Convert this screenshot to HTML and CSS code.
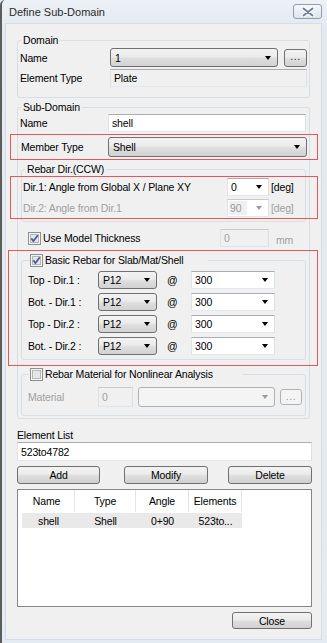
FILE: index.html
```html
<!DOCTYPE html>
<html>
<head>
<meta charset="utf-8">
<link rel="stylesheet" href="styles.css">
</head>
<body>
<div class="window">
  <div class="titlebar">
    <span class="title">Define Sub-Domain</span>
    <span class="closebtn"><svg width="14" height="10" viewBox="0 0 14 10"><path d="M2.5 1.5 L11.5 8.5 M11.5 1.5 L2.5 8.5" stroke="#fff" stroke-width="3.6" stroke-linecap="round"/><path d="M2.5 1.5 L11.5 8.5 M11.5 1.5 L2.5 8.5" stroke="#6f7c8c" stroke-width="1.8" stroke-linecap="round"/></svg></span>
  </div>
  <div class="frame">
    <div class="client">
      <fieldset class="grp g-domain">
        <legend>Domain</legend>
        <div class="row r-name">
          <span class="lbl w90">Name</span>
          <div class="combo w168"><span class="ctext">1</span><i class="arrow"></i></div>
          <span class="dots">...</span>
        </div>
        <div class="row r-etype">
          <span class="lbl w90">Element Type</span>
          <div class="ro w197">Plate</div>
        </div>
      </fieldset>

      <fieldset class="grp g-sub">
        <legend>Sub-Domain</legend>
        <div class="row r-subname">
          <span class="lbl w88">Name</span>
          <div class="tbox w198">shell</div>
        </div>
        <div class="redbox rb-member">
          <div class="row r-member">
            <span class="lbl w87">Member Type</span>
            <div class="combo w199"><span class="ctext">Shell</span><i class="arrow"></i></div>
          </div>
        </div>

        <fieldset class="grp g-dir">
          <legend>Rebar Dir.(CCW)</legend>
          <div class="redbox rb-dir">
            <div class="row r-dir">
              <span class="lbl w204">Dir.1: Angle from Global X / Plane XY</span>
              <div class="ecombo w42"><span class="ctext">0</span><i class="arrow"></i></div>
              <span class="unit">[deg]</span>
            </div>
            <div class="row r-dir r-dir2">
              <span class="lbl w204 dis">Dir.2: Angle from Dir.1</span>
              <div class="ecombo w42 disabled"><span class="ctext sel">90</span><i class="arrow"></i></div>
              <span class="unit dis">[deg]</span>
            </div>
          </div>
        </fieldset>

        <div class="row r-thick">
          <span class="chk"><svg width="13" height="13" viewBox="0 0 13 13"><rect x="0.5" y="0.5" width="12" height="12" fill="#f4f4f4" stroke="#8e8f8f"/><rect x="2.5" y="2.5" width="8" height="8" fill="#e6e6e6" stroke="#b6b8bb" stroke-width="1"/><path d="M3.3 6.4 L5.4 9 L9.8 3.2" fill="none" stroke="#4a5d94" stroke-width="1.7"/></svg></span>
          <span class="chklbl w179">Use Model Thickness</span>
          <div class="tbox w49 disabled"><span class="dis">0</span></div>
          <span class="mm">mm</span>
        </div>

        <div class="redbox rb-basic">
          <fieldset class="grp g-basic">
            <legend class="chklegend w179l">
              <span class="chk"><svg width="13" height="13" viewBox="0 0 13 13"><rect x="0.5" y="0.5" width="12" height="12" fill="#f4f4f4" stroke="#8e8f8f"/><rect x="2.5" y="2.5" width="8" height="8" fill="#e6e6e6" stroke="#b6b8bb" stroke-width="1"/><path d="M3.3 6.4 L5.4 9 L9.8 3.2" fill="none" stroke="#4a5d94" stroke-width="1.7"/></svg></span>
              <span class="chklbl">Basic Rebar for Slab/Mat/Shell</span>
            </legend>
            <div class="row r-bar">
              <span class="lbl w70">Top - Dir.1 :</span>
              <div class="combo w59"><span class="ctext">P12</span><i class="arrow"></i></div>
              <span class="at">@</span>
              <div class="ecombo w84"><span class="ctext">300</span><i class="arrow"></i></div>
            </div>
            <div class="row r-bar">
              <span class="lbl w70">Bot. - Dir.1 :</span>
              <div class="combo w59"><span class="ctext">P12</span><i class="arrow"></i></div>
              <span class="at">@</span>
              <div class="ecombo w84"><span class="ctext">300</span><i class="arrow"></i></div>
            </div>
            <div class="row r-bar">
              <span class="lbl w70">Top - Dir.2 :</span>
              <div class="combo w59"><span class="ctext">P12</span><i class="arrow"></i></div>
              <span class="at">@</span>
              <div class="ecombo w84"><span class="ctext">300</span><i class="arrow"></i></div>
            </div>
            <div class="row r-bar">
              <span class="lbl w70">Bot. - Dir.2 :</span>
              <div class="combo w59"><span class="ctext">P12</span><i class="arrow"></i></div>
              <span class="at">@</span>
              <div class="ecombo w84"><span class="ctext">300</span><i class="arrow"></i></div>
            </div>
          </fieldset>
        </div>

        <fieldset class="grp g-mat">
          <legend class="chklegend w214l">
            <span class="chk"><svg width="13" height="13" viewBox="0 0 13 13"><rect x="0.5" y="0.5" width="12" height="12" fill="#f4f4f4" stroke="#8e8f8f"/><rect x="2.5" y="2.5" width="8" height="8" fill="#e6e6e6" stroke="#b6b8bb" stroke-width="1"/></svg></span>
            <span class="chklbl">Rebar Material for Nonlinear Analysis</span>
          </legend>
          <div class="row r-mat">
            <span class="lbl w70 dis">Material</span>
            <div class="tbox w35 disabled"><span class="dis">0</span></div>
            <div class="dcombo w137"><i class="arrow garrow"></i></div>
            <span class="dots ddots">...</span>
          </div>
        </fieldset>
      </fieldset>

      <div class="ellabel">Element List</div>
      <div class="tbox ellist">523to4782</div>

      <div class="btnrow">
        <span class="btn b-add">Add</span>
        <span class="btn b-mod">Modify</span>
        <span class="btn b-del">Delete</span>
      </div>

      <div class="list">
        <div class="lhead">
          <span class="c c1">Name</span>
          <span class="c c2">Type</span>
          <span class="c c3">Angle</span>
          <span class="c c4">Elements</span>
        </div>
        <div class="lrow">
          <span class="c c1">shell</span>
          <span class="c c2">Shell</span>
          <span class="c c3">0+90</span>
          <span class="c c4">523to...</span>
        </div>
      </div>

      <div class="closerow">
        <span class="btn b-close">Close</span>
      </div>
    </div>
  </div>
</div>
</body>
</html>
```
FILE: styles.css
```css
* { box-sizing: border-box; }
html, body { margin: 0; padding: 0; }
body {
  width: 327px; height: 643px; overflow: hidden;
  background: #e4ebf3;
  font-family: "Liberation Sans", Arial, sans-serif;
  font-size: 10.5px; letter-spacing: -0.15px; color: #000;
}
.window {
  width: 327px; height: 643px;
  display: flex; flex-direction: column;
  background: linear-gradient(#edf1f6, #e2e9f1 30px, #e4ebf3);
  border-left: 2px solid #5c5c5c;
  border-top-left-radius: 5px;
}
.titlebar {
  height: 23px; flex: none;
  display: flex; align-items: center; justify-content: space-between;
  padding: 0 5px 0 7px;
}
.title { font-size: 11px; letter-spacing: 0; color: #2a2a2a; }
.closebtn {
  width: 29px; height: 15px;
  border: 1px solid #8e9cae; border-radius: 3px;
  background: linear-gradient(#f6f8fa, #dde4ec);
  display: flex; align-items: center; justify-content: center;
}
.frame { flex: 1; display: flex; padding: 0 5px 3px 3px; }
.client {
  flex: 1; display: flex; flex-direction: column;
  background: #f0f0f0;
  border: 1px solid #d3dde8;
  padding: 10px 9px 0 11px;
}

fieldset.grp {
  margin: 0; padding: 0; min-width: 0;
  border: 1px solid #d5dfe5; border-radius: 3px;
}
fieldset.grp > legend {
  padding: 0 2px; margin-left: 3px;
  line-height: 13px; height: 13px;
}
.row { display: flex; align-items: center; flex: none; }
.lbl { flex: none; white-space: nowrap; }
.dis { color: #a0a0a0; }

.w35 { width: 35px; } .w42 { width: 42px; } .w49 { width: 49px; }
.w59 { width: 59px; } .w70 { width: 70px; } .w84 { width: 84px; }
.w87 { width: 87px; } .w88 { width: 88px; } .w90 { width: 90px; }
.w137 { width: 137px; } .w168 { width: 168px; } .w179 { width: 179px; }
.w197 { width: 197px; } .w198 { width: 198px; } .w199 { width: 199px; }
.w204 { width: 204px; }

/* controls */
.combo {
  flex: none; height: 100%;
  display: flex; align-items: center;
  border: 1px solid #707070; border-radius: 3px;
  background: linear-gradient(#f3f3f3 0%, #ebebeb 45%, #dedede 55%, #d2d2d2 100%);
  padding-left: 4px;
}
.ecombo {
  flex: none; height: 100%;
  display: flex; align-items: center;
  border: 1px solid; border-color: #abadb3 #dbdfe6 #e3e9ef #e2e3ea;
  background: #fff; padding-left: 3px;
}
.ecombo.disabled { border-color: #c8cacd #dfe2e6 #e5e8ec #e2e3ea; }
.ecombo.disabled .ctext.sel { background: #f0f0f0; color: #9a9a9a; padding: 0 6px 0 1px; margin-left: -2px; line-height: 14px; }
.dcombo {
  flex: none; height: 100%; margin-left: 5px;
  display: flex; align-items: center;
  border: 1px solid #adb2b5; border-radius: 3px;
  background: #f4f4f4;
}
.ctext { white-space: nowrap; }
.arrow {
  margin-left: auto; margin-right: 6px;
  width: 0; height: 0;
  border-left: 3.5px solid transparent; border-right: 3.5px solid transparent;
  border-top: 4px solid #000;
}
.disabled .arrow, .garrow { border-top-color: #9a9a9a; }
.tbox {
  flex: none; height: 100%;
  display: flex; align-items: center;
  border: 1px solid; border-color: #abadb3 #dbdfe6 #e3e9ef #e2e3ea;
  background: #fff; padding-left: 3px;
}
.tbox.disabled { background: #f0f0f0; border-color: #c9cbce #dcdfe3 #e2e5e9 #dfe1e5; }
.ro {
  flex: none; height: 100%;
  display: flex; align-items: center;
  border: 1px solid; border-color: #abadb3 #dbdfe6 #e3e9ef #e2e3ea;
  background: #f0f0f0; padding-left: 3px;
}
.dots {
  flex: none;
  display: flex; align-items: center; justify-content: center;
  border: 1px solid #707070; border-radius: 3px;
  background: linear-gradient(#f3f3f3 0%, #ebebeb 45%, #dedede 55%, #d2d2d2 100%);
  color: #2b2b5a; letter-spacing: 0.5px; padding-bottom: 3px;
}
.chk { flex: none; width: 13px; height: 13px; display: inline-flex; }
.chklbl { white-space: nowrap; padding-left: 2px; }

/* domain */
.g-domain { margin-right: 2px !important; padding-bottom: 10px !important; }
.r-name { height: 19px; margin-top: 1px; padding-left: 2px; }
.r-name .dots { width: 23px; height: 18px; margin-left: 6px; }
.r-etype { height: 18px; margin-top: 2px; padding-left: 2px; }

/* sub-domain */
.g-sub { margin-top: 3px !important; margin-right: 2px !important; padding-bottom: 2px !important; }
.r-subname { height: 18px; padding-left: 2px; }
.redbox { border: 1px solid #e4575b; }
.rb-member { margin: 2px -9px 0 -8px; padding: 2px 0 2px 10px; }
.r-member { height: 20px; }

.g-dir { margin: 3px 3px 0 3px !important; padding-bottom: 2px !important; }
.rb-dir { margin: 0 -13px 0 -12px; padding: 1px 0 1px 12px; }
.r-dir { height: 18px; }
.r-dir2 { margin-top: 3px; }
.unit { margin-left: 2px; }

.r-thick { height: 18px; margin-top: 7px; padding-left: 10px; }
.r-thick .chklbl { padding-left: 2px; }
.mm { color: #a0a0a0; margin-left: 7px; padding-top: 4px; }

.rb-basic { margin: 3px -9px 0 -10px; padding: 3px 11px 5px 12px; }
.g-basic { padding: 0 0 4px 0 !important; }
fieldset.grp > legend.chklegend {
  display: flex; align-items: center;
  margin-left: 7px; padding: 0 0 0 1px;
}
.w179l { width: 179px; }
.w214l { width: 214px; }
.r-bar { height: 18px; margin-top: 4px; padding-left: 6px; }
.at { width: 24px; margin-left: 10px; flex: none; }

.g-mat { margin: 2px 3px 0 3px !important; padding: 6px 0 8px 0 !important; }
.r-mat { height: 20px; padding-left: 6px; }
.ddots {
  width: 22px; height: 16px; margin-left: 5px;
  border-color: #adb2b5; background: #f4f4f4; color: #9a9a9a;
}

/* bottom */
.ellabel { margin-top: 10px; line-height: 13px; height: 13px; flex: none; }
.ellist { height: 19px; width: 100%; }
.btnrow { display: flex; height: 18px; margin-top: 5px; flex: none; }
.btn {
  display: flex; align-items: center; justify-content: center;
  height: 100%;
  border: 1px solid #707070; border-radius: 3px;
  background: linear-gradient(#f3f3f3 0%, #ebebeb 45%, #dedede 55%, #d0d0d0 100%);
  color: #000;
}
.b-add { width: 83px; }
.b-mod { width: 84px; margin-left: 24px; }
.b-del { width: 84px; margin-left: 20px; }

.list {
  flex: none; height: 118px; margin-top: 5px;
  border: 1px solid #828790; background: #fff;
}
.lhead { display: flex; height: 22px; padding-left: 1px; }
.lhead .c { border-right: 1px solid #e5e5e5; }
.lrow { display: flex; height: 15px; margin-top: 1px; padding-left: 1px; }
.c { display: flex; align-items: center; justify-content: center; flex: none; white-space: nowrap; }
.c1 { width: 56px; }
.c2 { width: 61px; }
.c3 { width: 53px; }
.c4 { width: 53px; }
.lrow .c { background: #e9e9e9; }
.lrow .c1 { margin-left: 3px; width: 53px; }

.closerow { display: flex; justify-content: flex-end; margin-top: 5px; height: 17px; flex: none; }
.b-close { width: 80px; }
```
